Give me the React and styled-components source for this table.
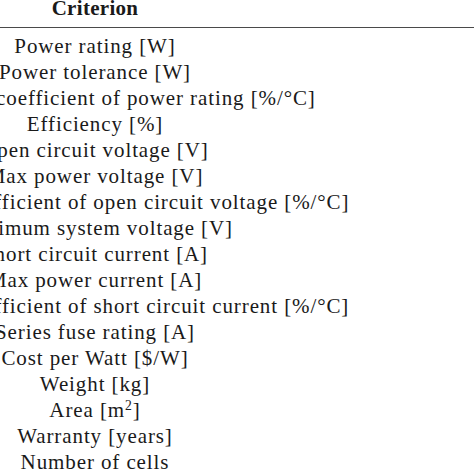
import React from "react";
import styled, { createGlobalStyle } from "styled-components";

const GlobalStyle = createGlobalStyle`
    html, body {
        margin: 0;
        padding: 0;
        background: #ffffff;
        overflow: hidden;
    }
`;

const criteria = [
    "Power rating [W]",
    "Power tolerance [W]",
    "Temperature coefficient of power rating [%/°C]",
    "Efficiency [%]",
    "Open circuit voltage [V]",
    "Max power voltage [V]",
    "Temperature coefficient of open circuit voltage [%/°C]",
    "Maximum system voltage [V]",
    "Short circuit current [A]",
    "Max power current [A]",
    "Temperature coefficient of short circuit current [%/°C]",
    "Series fuse rating [A]",
    "Cost per Watt [$/W]",
    "Weight [kg]",
    "AREA",
    "Warranty [years]",
    "Number of cells",
];

const App = () => {
    return (
        <>
            <GlobalStyle />
            <Table>
                <HeaderRow>
                    <HeaderCell>Criterion</HeaderCell>
                </HeaderRow>
                <Body>
                    {criteria.map((label, idx) => (
                        <Row key={idx}>
                            <Cell>
                                {label === "AREA" ? (
                                    <span>
                                        Area [m<Sup>2</Sup>]
                                    </span>
                                ) : (
                                    label
                                )}
                            </Cell>
                        </Row>
                    ))}
                </Body>
            </Table>
        </>
    );
};

export default App;

const Table = styled.div`
    width: 100%;
    margin-top: -5px;

    font-family: "Liberation Serif", "DejaVu Serif", serif;
    font-size: 21px;
    color: #1a1a1a;
`;

const HeaderRow = styled.div`
    display: flex;
    padding-bottom: 6px;
    border-bottom: 1.5px solid #4a4a4a;
`;

const HeaderCell = styled.div`
    width: 190px;
    display: flex;
    justify-content: center;

    line-height: 26px;
    font-weight: bold;
    letter-spacing: 0.3px;
    white-space: nowrap;
`;

const Body = styled.div`
    display: flex;
    flex-direction: column;
    padding-top: 4.5px;
`;

const Row = styled.div`
    display: flex;
    height: 26px;
`;

const Cell = styled.div`
    width: 190px;
    display: flex;
    justify-content: center;

    line-height: 26px;
    letter-spacing: 0.9px;
    white-space: nowrap;
`;

const Sup = styled.sup`
    font-size: 0.65em;
    line-height: 0;
    vertical-align: 0.55em;
`;
